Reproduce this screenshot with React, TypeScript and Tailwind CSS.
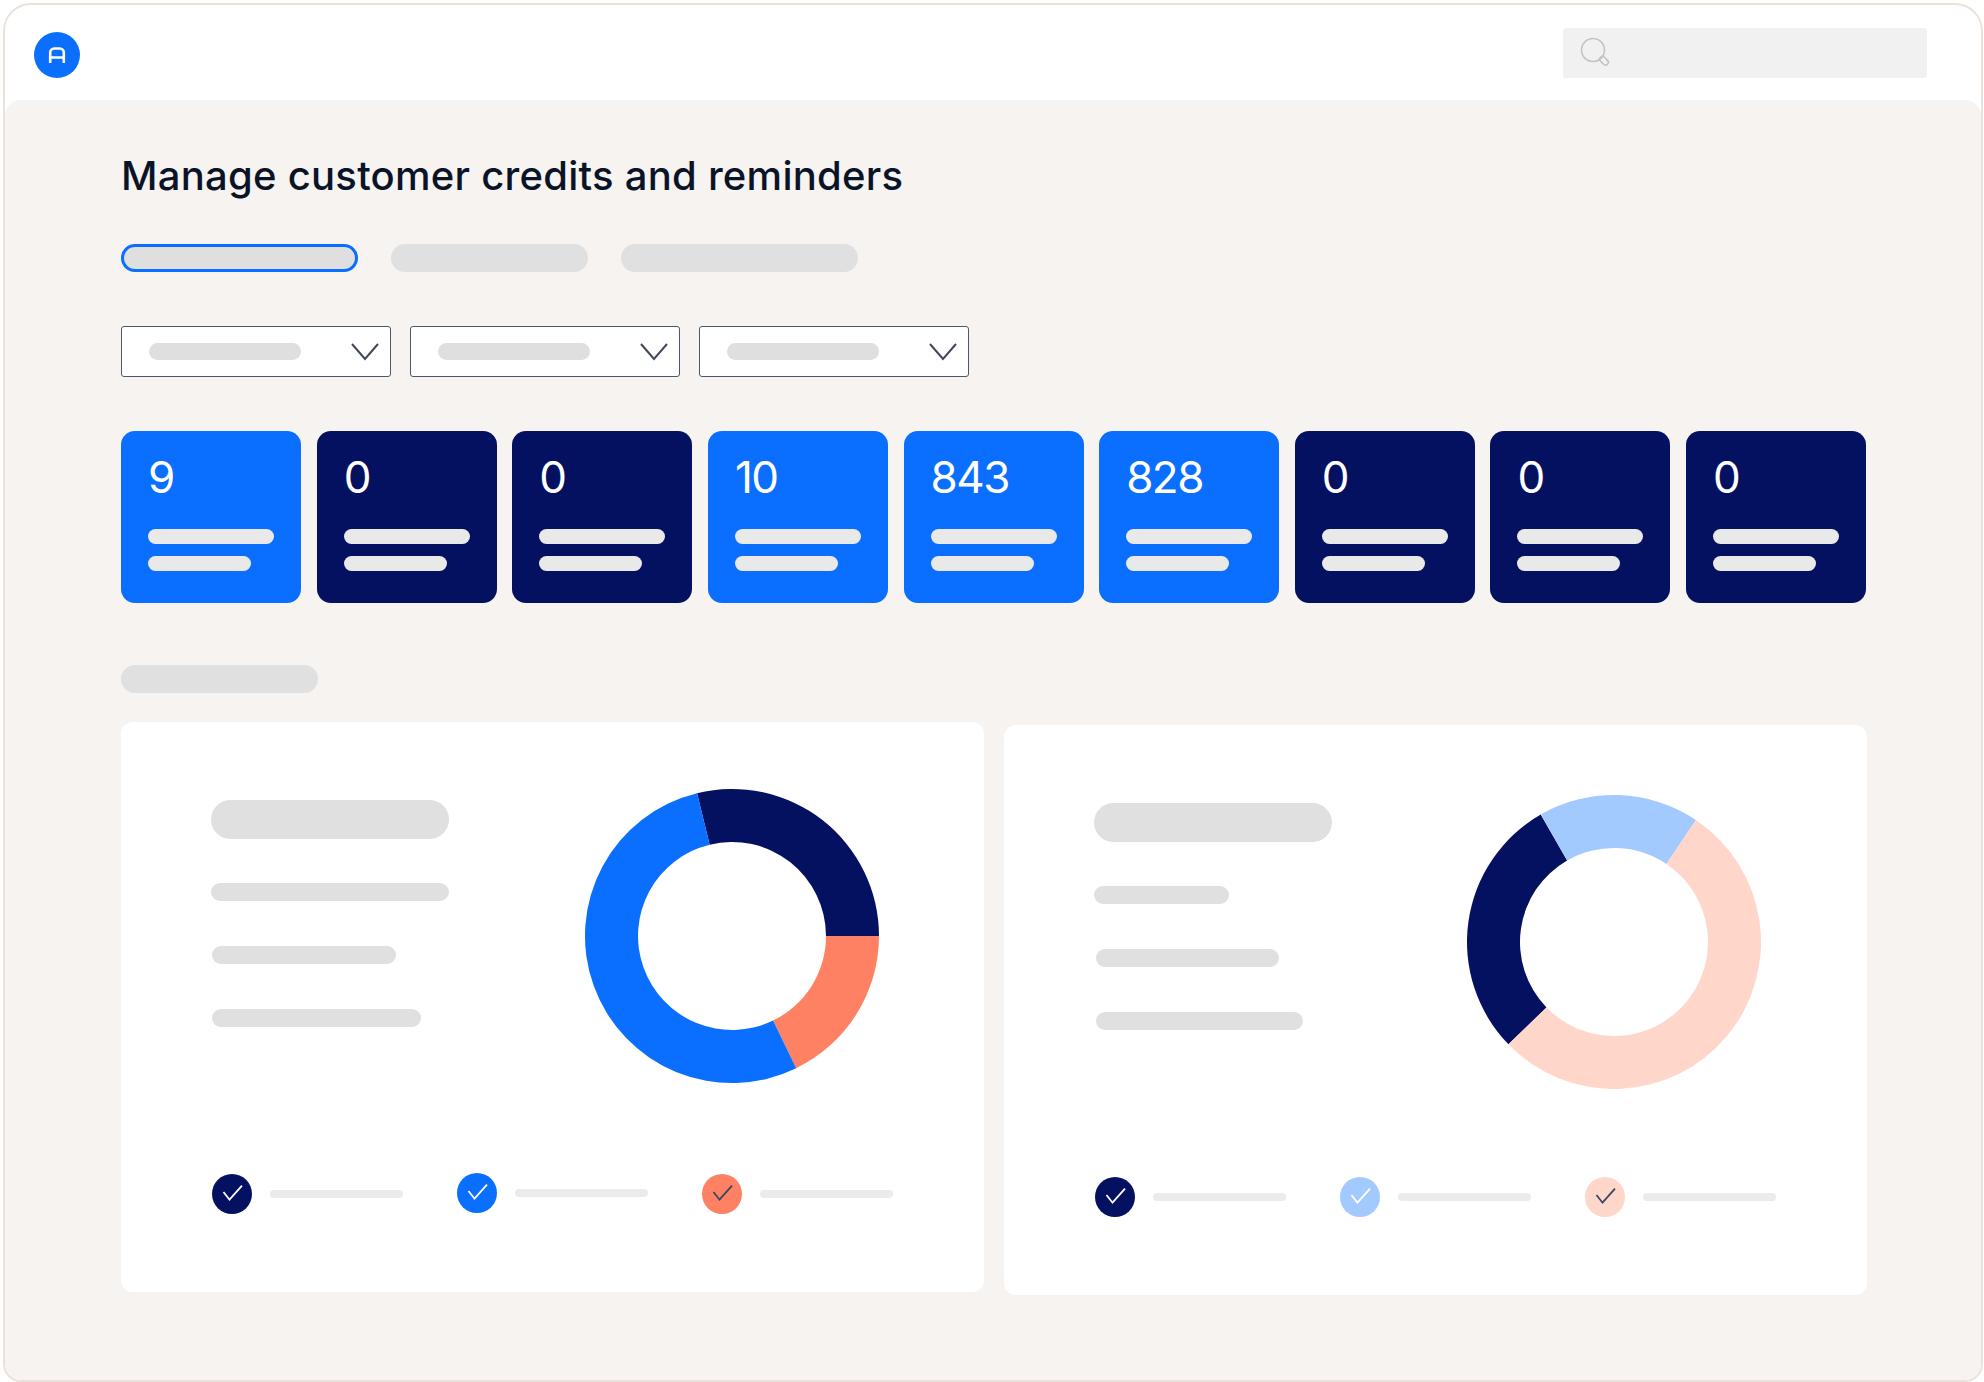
const navy = '#041060';
const blue = '#0a6eff';
const coral = '#ff8164';
const peach = '#ffd7ca';
const sky = '#a3caff';

const stats = [
  { value: '9', bg: 'bg-[#0a6eff]' },
  { value: '0', bg: 'bg-[#041060]' },
  { value: '0', bg: 'bg-[#041060]' },
  { value: '10', bg: 'bg-[#0a6eff]' },
  { value: '843', bg: 'bg-[#0a6eff]' },
  { value: '828', bg: 'bg-[#0a6eff]' },
  { value: '0', bg: 'bg-[#041060]' },
  { value: '0', bg: 'bg-[#041060]' },
  { value: '0', bg: 'bg-[#041060]' },
];

// angles are clockwise from twelve o'clock
function point(r: number, deg: number) {
  const a = (deg * Math.PI) / 180;
  return `${(150 + r * Math.sin(a)).toFixed(2)} ${(150 - r * Math.cos(a)).toFixed(2)}`;
}

function slice(from: number, to: number) {
  const large = to - from > 180 ? 1 : 0;
  return `M${point(147, from)} A147 147 0 ${large} 1 ${point(147, to)} L${point(94, to)} A94 94 0 ${large} 0 ${point(94, from)} Z`;
}

function Donut({ parts }: { parts: { from: number; to: number; color: string }[] }) {
  return (
    <svg width="300" height="300" viewBox="0 0 300 300" className="block shrink-0">
      {parts.map((p) => (
        <path key={p.from} d={slice(p.from, p.to)} fill={p.color} />
      ))}
    </svg>
  );
}

function Chevron() {
  return (
    <svg width="28" height="20" viewBox="0 0 28 20" fill="none" className="shrink-0">
      <path d="M1 2l13 15L27 2" stroke="#3f4859" strokeWidth="2" />
    </svg>
  );
}

function Select() {
  return (
    <div className="flex h-[51px] w-[270px] items-center justify-between rounded-[3px] border border-[#4f5668] bg-white pl-[27px] pr-[11px]">
      <div className="h-[17px] w-[152px] rounded-full bg-[#dfdfdf]" />
      <Chevron />
    </div>
  );
}

function StatCard({ value, bg }: { value: string; bg: string }) {
  return (
    <div className={`h-[172px] w-[180px] rounded-[14px] pl-[27px] pt-[20px] ${bg}`}>
      <div className="h-[52px] text-[44px] leading-[52px] font-normal tracking-[-1.5px] text-white">{value}</div>
      <div className="mt-[26px] h-[15px] w-[126px] rounded-full bg-[#e9e9e9]" />
      <div className="mt-[12px] h-[15px] w-[103px] rounded-full bg-[#e9e9e9]" />
    </div>
  );
}

function LegendItem({ color, dark, className }: { color: string; dark?: boolean; className?: string }) {
  return (
    <div className={`flex w-[245px] items-center ${className ?? ''}`}>
      <div className="flex h-[40px] w-[40px] items-center justify-center rounded-full" style={{ backgroundColor: color }}>
        <svg width="24" height="24" viewBox="0 0 24 24" fill="none">
          <path d="M3.5 10l6 7.7L22 3.7" stroke={dark ? '#3a4560' : '#ffffff'} strokeWidth="1.8" />
        </svg>
      </div>
      <div className="ml-[18px] h-[8px] w-[133px] rounded-full bg-[#ebebeb]" />
    </div>
  );
}

function ChartCard({
  lines,
  parts,
  legend,
  donutClass,
  className,
}: {
  lines: { w: string; ml: string }[];
  parts: { from: number; to: number; color: string }[];
  legend: { color: string; dark?: boolean; mt: string }[];
  donutClass: string;
  className?: string;
}) {
  return (
    <div className={`h-[570px] w-[863px] rounded-[12px] bg-white pl-[90px] ${className ?? ''}`}>
      <div className="flex">
        <div className="pt-[78px]">
          <div className="h-[39px] w-[238px] rounded-full bg-[#e0e0e0]" />
          <div className="mt-[44px] flex flex-col gap-[45px]">
            {lines.map((l, i) => (
              <div key={i} className={`h-[18px] rounded-full bg-[#e0e0e0] ${l.w} ${l.ml}`} />
            ))}
          </div>
        </div>
        <div className={donutClass}>
          <Donut parts={parts} />
        </div>
      </div>
      <div className="mt-[85px] flex pl-px">
        {legend.map((item) => (
          <LegendItem key={item.color} color={item.color} dark={item.dark} className={item.mt} />
        ))}
      </div>
    </div>
  );
}

export default function App() {
  return (
    <div className="h-[1382px] overflow-hidden bg-white pl-[3px] pr-px pt-[3px] font-['Inter',sans-serif]">
      <div className="flex h-[1379px] flex-col overflow-hidden rounded-t-[28px] rounded-b-[18px] border-2 border-[#ebe3da] bg-white">
        <header className="flex h-[95px] shrink-0 items-start justify-between pr-[54px]">
          <div className="ml-[29px] mt-[27px] flex h-[46px] w-[46px] items-center justify-center rounded-full bg-[#0a6eff]">
            <svg width="18" height="18" viewBox="0 0 18 18" fill="none">
              <path d="M2.2 17V6.5A4 4 0 0 1 6.2 2.5h5.6a4 4 0 0 1 4 4V17M2.2 11.5h13.6" stroke="#ffffff" strokeWidth="2.6" />
            </svg>
          </div>
          <div className="mt-[23px] flex h-[50px] w-[364px] items-center rounded-[3px] bg-[#f1f1f1] pl-[17px]">
            <svg width="32" height="32" viewBox="0 0 32 32" fill="none" stroke="#c2c2c2" strokeWidth="1.5">
              <circle cx="13" cy="13" r="11.5" />
              <rect x="19" y="21" width="10" height="5.5" rx="2.75" transform="rotate(45 24 23.75)" />
            </svg>
          </div>
        </header>

        <main className="flex-1 rounded-[16px] bg-[#f7f3f0] pl-[116px] pr-[114px] pt-[52px]">
          <h1 className="text-[40px] leading-[48px] font-[450] tracking-[0.25px] text-[#0a1428]">
            Manage customer credits and reminders
          </h1>

          <div className="mt-[44px] flex gap-[33px]">
            <div className="h-[28px] w-[237px] rounded-full border-[3px] border-[#0a6eff] bg-[#dfdfdf]" />
            <div className="h-[28px] w-[197px] rounded-full bg-[#e0e0e0]" />
            <div className="h-[28px] w-[237px] rounded-full bg-[#e0e0e0]" />
          </div>

          <div className="mt-[54px] flex gap-[19px]">
            <Select />
            <Select />
            <Select />
          </div>

          <div className="mt-[54px] flex w-[1745px] justify-between">
            {stats.map((s, i) => (
              <StatCard key={i} value={s.value} bg={s.bg} />
            ))}
          </div>

          <div className="mt-[62px] h-[28px] w-[197px] rounded-full bg-[#e0e0e0]" />

          <div className="mt-[29px] flex items-start gap-[20px]">
            <ChartCard
              lines={[
                { w: 'w-[238px]', ml: '' },
                { w: 'w-[184px]', ml: 'ml-px' },
                { w: 'w-[209px]', ml: 'ml-px' },
              ]}
              parts={[
                { from: -13.75, to: 90, color: navy },
                { from: 90, to: 154.1, color: coral },
                { from: 154.1, to: 346.25, color: blue },
              ]}
              legend={[
                { color: navy, mt: '' },
                { color: blue, mt: '-mt-[2px]' },
                { color: coral, dark: true, mt: '' },
              ]}
              donutClass="ml-[133px] pb-[3px] pt-[64px]"
            />
            <ChartCard
              className="mt-[3px]"
              lines={[
                { w: 'w-[135px]', ml: '' },
                { w: 'w-[183px]', ml: 'ml-[2px]' },
                { w: 'w-[207px]', ml: 'ml-[2px]' },
              ]}
              parts={[
                { from: -134.1, to: -29.9, color: navy },
                { from: -29.9, to: 33.9, color: sky },
                { from: 33.9, to: 225.9, color: peach },
              ]}
              legend={[
                { color: navy, mt: '' },
                { color: sky, mt: '' },
                { color: peach, dark: true, mt: '' },
              ]}
              donutClass="ml-[132px] pt-[67px]"
            />
          </div>
        </main>
      </div>
    </div>
  );
}
